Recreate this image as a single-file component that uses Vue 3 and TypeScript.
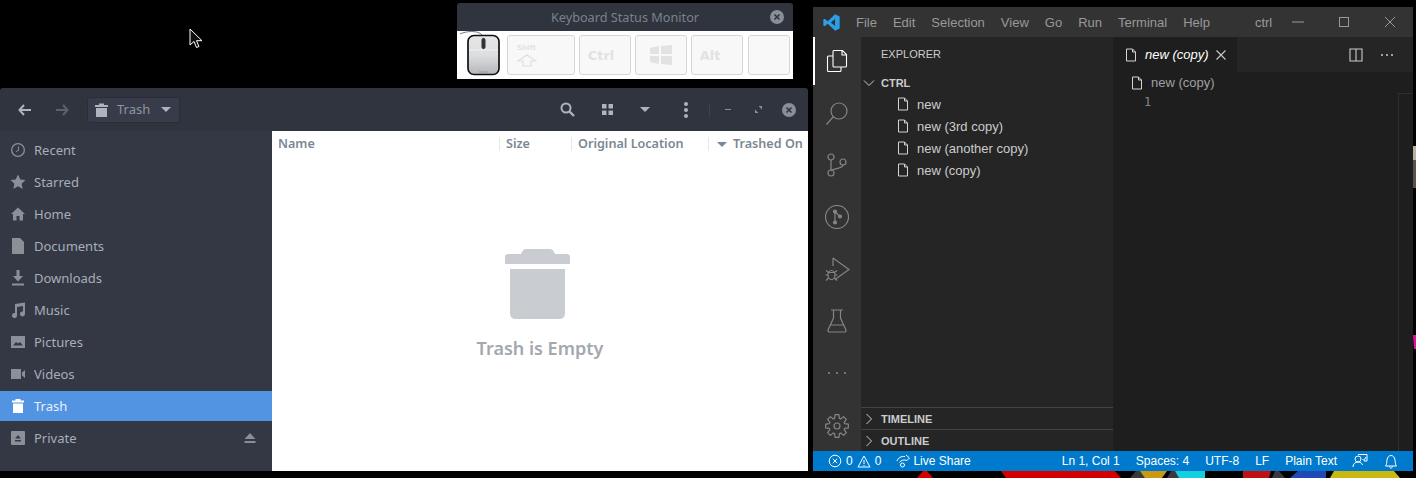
<template>
  <div class="desktop">
    <svg class="wallpaper" width="1416" height="478" viewBox="0 0 1416 478">
      <path d="M917 478l6-7h4l6 7z" fill="#d40000" />
      <path d="M1001 471h114l6 7H1006z" fill="#d40000" />
      <path d="M1130 478l6-7h4l7 7z" fill="#3a3a3a" />
      <path d="M1140 471h27l-5 7h-17z" fill="#c99a10" />
      <path d="M1167 478l4-7h4l5 7z" fill="#3a3a3a" />
      <path d="M1175 471h30v7h-26z" fill="#14cfe0" />
      <path d="M1243 471h28l-2 7h-26z" fill="#c01010" />
      <path d="M1272 478l3-7h4l6 7z" fill="#3a3a3a" />
      <path d="M1298 471h28v7h-36z" fill="#2248b8" />
      <path d="M1334 471h60l6 7h-70z" fill="#c8b810" />
      <rect x="1413" y="146" width="3" height="22" fill="#b8b0a0" />
      <rect x="1413" y="160" width="3" height="28" fill="#5c5048" />
      <path d="M1413 335h3v14h-2z" fill="#e0109c" />
    </svg>

    <svg class="cursor" width="14" height="22" viewBox="0 0 14 22">
      <path d="M1 1v16l4-3.500 2.500 6 2.500-1-2.500-5.800H13z" fill="#111" stroke="#fff" stroke-width="1" />
    </svg>

    <section class="monitor">
      <header class="monitor-title">
        <span>Keyboard Status Monitor</span>
        <svg class="monitor-close" width="14" height="14" viewBox="0 0 14 14">
          <circle cx="7" cy="7" r="7" fill="#8a8e96" />
          <path d="M4.500 4.500l5 5M9.500 4.500l-5 5" stroke="#2f343f" stroke-width="1.600" />
        </svg>
      </header>
      <div class="monitor-keys">
        <svg class="mouse" width="35" height="46" viewBox="0 0 35 46">
          <defs>
            <linearGradient id="mouseBody" x1="0" y1="0" x2="0" y2="1">
              <stop offset="0" stop-color="#e4e6e8" />
              <stop offset="0.5" stop-color="#dcdee0" />
              <stop offset="1" stop-color="#b4b6b9" />
            </linearGradient>
          </defs>
          <path d="M-6 3c6-3 18-4 22 1" fill="none" stroke="#555" stroke-width="0.800" />
          <rect x="2" y="4.500" width="31" height="39" rx="6" fill="url(#mouseBody)" stroke="#111" stroke-width="1.700" />
          <path d="M3 19h29" stroke="#f2f2f2" />
          <path d="M17.500 5v14" stroke="#c9cbce" />
          <rect x="15.500" y="7" width="4" height="11" rx="2" fill="#333" />
          <path d="M13 41h9" stroke="#999" />
        </svg>
        <div class="key key-shift">
          <span class="shift-label">Shift</span>
          <svg width="20" height="13" viewBox="0 0 20 13">
            <path d="M1 7l9-6 9 6h-5v5H6V7z" fill="none" stroke="#dedede" stroke-width="1.200" />
          </svg>
        </div>
        <div class="key key-mid key-ctrl">Ctrl</div>
        <div class="key key-mid">
          <svg width="22" height="20" viewBox="0 0 22 20">
            <path d="M0 3l9-2v8H0zM11 1l11-1v9H11zM0 11h9v8l-9-2zM11 11h11v9l-11-1z" fill="#e2e2e2" />
          </svg>
        </div>
        <div class="key key-mid key-alt">Alt</div>
        <div class="key key-last"></div>
      </div>
    </section>

    <section class="files">
      <header class="files-header">
        <svg class="hd-icon back" width="14" height="12" viewBox="0 0 14 12">
          <path d="M6 1L1.500 6 6 11M2 6h11" fill="none" stroke="#aeb3bc" stroke-width="2" />
        </svg>
        <svg class="hd-icon forward" width="14" height="12" viewBox="0 0 14 12">
          <path d="M8 1l4.500 5L8 11M12 6H1" fill="none" stroke="#5c616c" stroke-width="2" />
        </svg>
        <div class="path-btn">
          <svg width="13" height="14" viewBox="0 0 13 14">
            <path d="M0 2h4V.5h5V2h4v2H0zM1 5h11v9H1z" fill="#aeb3bc" />
          </svg>
          <span class="path-name">Trash</span>
          <i class="caret"></i>
        </div>
        <div class="hd-right">
          <svg class="search" width="15" height="15" viewBox="0 0 15 15">
            <circle cx="6" cy="6" r="4.500" fill="none" stroke="#aeb3bc" stroke-width="2" />
            <path d="M9.500 9.500L14 14" stroke="#aeb3bc" stroke-width="2.400" />
          </svg>
          <svg class="grid" width="11" height="11" viewBox="0 0 11 11">
            <path d="M0 0h4.500v4.500H0zM6.500 0H11v4.500H6.500zM0 6.500h4.500V11H0zM6.500 6.500H11V11H6.500z" fill="#aeb3bc" />
          </svg>
          <i class="caret view-caret"></i>
          <svg class="dots" width="4" height="16" viewBox="0 0 4 16">
            <circle cx="2" cy="2" r="2" fill="#aeb3bc" />
            <circle cx="2" cy="8" r="2" fill="#aeb3bc" />
            <circle cx="2" cy="14" r="2" fill="#aeb3bc" />
          </svg>
          <span class="hd-sep"></span>
          <span class="win-min"></span>
          <svg class="win-restore" width="7" height="7" viewBox="0 0 7 7">
            <path d="M3.500 0H7v3.500zM0 3.500V7h3.500z" fill="#8a8e96" />
          </svg>
          <svg class="win-close" width="14" height="14" viewBox="0 0 14 14">
            <circle cx="7" cy="7" r="7" fill="#8a8e96" />
            <path d="M4.500 4.500l5 5M9.500 4.500l-5 5" stroke="#2f343f" stroke-width="1.600" />
          </svg>
        </div>
      </header>
      <div class="files-body">
        <nav class="places">
          <div v-for="place in places" :key="place.name" class="place" :class="{ active: place.name === 'Trash' }">
            <svg class="place-icon" width="16" height="16" viewBox="0 0 16 16">
              <path :d="place.icon" fill-rule="evenodd" />
            </svg>
            <span>{{ place.name }}</span>
            <svg v-if="place.name === 'Private'" class="eject" width="12" height="10" viewBox="0 0 12 10">
              <path d="M6 0l5.500 6H.5zM.5 8h11v2H.5z" fill="#8a8e96" />
            </svg>
          </div>
        </nav>
        <main class="listing">
          <div class="columns">
            <div class="col">Name</div>
            <div class="col">Size</div>
            <div class="col">Original Location</div>
            <div class="col col-sorted"><i class="sort-caret"></i>Trashed On</div>
          </div>
          <div class="empty">
            <svg class="empty-icon" width="66" height="70" viewBox="0 0 66 70">
              <path d="M21 0h24q3 0 5 5h12q3 0 3 3v7H0V8q0-3 3-3h13q2-5 5-5z" fill="#c9ccd0" />
              <path d="M5 20h55v44q0 6-6 6H11q-6 0-6-6z" fill="#c9ccd0" />
            </svg>
            <div class="empty-text">Trash is Empty</div>
          </div>
        </main>
      </div>
    </section>

    <section class="code">
      <header class="code-title">
        <svg class="code-logo" width="17" height="17" viewBox="0 0 100 100">
          <path d="M71 2l27 12v72L71 98 28 58 10 72 2 68V32l8-4 18 14zM71 29L46 50l25 21z" fill="#2b9fe8" fill-rule="evenodd" />
        </svg>
        <nav class="menu">
          <span v-for="item in menu" :key="item">{{ item }}</span>
        </nav>
        <span class="code-name">ctrl</span>
        <div class="win-buttons">
          <svg width="12" height="12" viewBox="0 0 12 12"><path d="M0 6h12" stroke="#999" /></svg>
          <svg width="12" height="12" viewBox="0 0 12 12"><rect x="1.500" y="1.500" width="9" height="9" fill="none" stroke="#999" /></svg>
          <svg width="12" height="12" viewBox="0 0 12 12"><path d="M1 1l10 10M11 1L1 11" stroke="#999" /></svg>
        </div>
      </header>
      <div class="code-main">
        <aside class="activity">
          <div class="act act-on">
            <svg width="24" height="24" viewBox="0 0 24 24" fill="none" stroke="#fff" stroke-width="1.100">
              <path d="M9 1.500h8.500l4 4V17a1 1 0 0 1-1 1H9a1 1 0 0 1-1-1V2.500a1 1 0 0 1 1-1zM17 1.500V6h4.500" />
              <path d="M8 7H3.500a1 1 0 0 0-1 1v13.500a1 1 0 0 0 1 1H15a1 1 0 0 0 1-1V18" />
            </svg>
          </div>
          <div class="act">
            <svg width="24" height="24" viewBox="0 0 24 24" fill="none" stroke="#858585" stroke-width="1.200">
              <circle cx="14" cy="10" r="8" /><path d="M8.500 15.500L1.500 23.500" />
            </svg>
          </div>
          <div class="act">
            <svg width="24" height="24" viewBox="0 0 24 24" fill="none" stroke="#858585" stroke-width="1.200">
              <circle cx="6" cy="4" r="3" /><circle cx="6" cy="20" r="3" /><circle cx="18" cy="9" r="3" />
              <path d="M6 7v10M18 12c0 4-10 3-12 6" />
            </svg>
          </div>
          <div class="act">
            <svg width="24" height="24" viewBox="0 0 24 24" fill="none" stroke="#858585" stroke-width="1.200">
              <circle cx="12" cy="12" r="11.500" /><path d="M10 6v12M10 7l6 5" />
              <circle cx="10" cy="6.500" r="1.500" fill="#858585" /><circle cx="10" cy="17.500" r="1.500" fill="#858585" /><circle cx="15" cy="11.500" r="1.500" fill="#858585" />
            </svg>
          </div>
          <div class="act">
            <svg width="25" height="25" viewBox="0 0 25 25" fill="none" stroke="#858585" stroke-width="1.200">
              <path d="M8 1l16 11.500-14 10M8 1v8" />
              <ellipse cx="6.500" cy="18" rx="3.500" ry="4.500" />
              <path d="M1 13.500l2.500 2M12 13.500l-2.500 2M.5 18H3M10 18h2.500M1 23.500l2.500-2.500M12 23.500L9.500 21M3.500 15.500h6" />
            </svg>
          </div>
          <div class="act">
            <svg width="20" height="24" viewBox="0 0 20 24" fill="none" stroke="#858585" stroke-width="1.200">
              <path d="M4 1h12M6.500 1v8L1 21a1.500 1.500 0 0 0 1.500 2h15a1.500 1.500 0 0 0 1.500-2L13.500 9V1M4 16h12" />
            </svg>
          </div>
          <div class="act">
            <svg width="20" height="4" viewBox="0 0 20 4">
              <circle cx="2" cy="2" r="1.100" fill="#858585" /><circle cx="10" cy="2" r="1.100" fill="#858585" /><circle cx="18" cy="2" r="1.100" fill="#858585" />
            </svg>
          </div>
          <div class="act act-gear">
            <svg width="24" height="24" viewBox="0 0 24 24" fill="none" stroke="#858585" stroke-width="1.200">
              <circle cx="12" cy="12" r="3" />
              <path :d="gearPath" stroke-linejoin="round" />
            </svg>
          </div>
        </aside>
        <aside class="explorer">
          <div class="ex-title">EXPLORER</div>
          <div class="ex-root">
            <svg class="chev" width="12" height="12" viewBox="0 0 12 12"><path d="M1 3.500l5 5 5-5" fill="none" stroke="#ccc" /></svg>
            CTRL
          </div>
          <div v-for="file in fileNames" :key="file" class="ex-file">
            <svg class="file-icon" width="12" height="14" viewBox="0 0 12 14">
              <path d="M1.500 1h6l3 3v9h-9zM7.500 1v3h3" fill="none" stroke="#d4d4d4" />
            </svg>
            {{ file }}
          </div>
          <div class="ex-spacer"></div>
          <div v-for="sec in ['TIMELINE', 'OUTLINE']" :key="sec" class="ex-section">
            <svg class="chev" width="12" height="12" viewBox="0 0 12 12"><path d="M3.500 1l5 5-5 5" fill="none" stroke="#ccc" /></svg>
            {{ sec }}
          </div>
        </aside>
        <div class="editor">
          <div class="tabs">
            <div class="tab">
              <svg width="12" height="14" viewBox="0 0 12 14"><path d="M1.500 1h6l3 3v9h-9zM7.500 1v3h3" fill="none" stroke="#d4d4d4" /></svg>
              <em>new (copy)</em>
              <svg class="tab-x" width="10" height="10" viewBox="0 0 10 10"><path d="M.5.5l9 9M9.500.5l-9 9" stroke="#ccc" stroke-width="1.100" /></svg>
            </div>
            <div class="tab-actions">
              <svg width="14" height="14" viewBox="0 0 14 14"><path d="M1 1h12v12H1zM7 1v12" fill="none" stroke="#ccc" stroke-width="1.100" /></svg>
              <svg width="14" height="4" viewBox="0 0 14 4"><circle cx="2" cy="2" r="1" fill="#ccc" /><circle cx="7" cy="2" r="1" fill="#ccc" /><circle cx="12" cy="2" r="1" fill="#ccc" /></svg>
            </div>
          </div>
          <div class="crumbs">
            <svg width="12" height="14" viewBox="0 0 12 14"><path d="M1.500 1h6l3 3v9h-9zM7.500 1v3h3" fill="none" stroke="#d4d4d4" /></svg>
            new (copy)
          </div>
          <div class="edit-area">
            <div class="lines"><span>1</span></div>
            <div class="scroll-strip"></div>
          </div>
        </div>
      </div>
      <footer class="status">
        <svg class="st-err" width="14" height="14" viewBox="0 0 14 14" fill="none" stroke="#fff">
          <circle cx="7" cy="7" r="5.800" /><path d="M4.800 4.800l4.400 4.400M9.200 4.800l-4.400 4.400" />
        </svg>
        <span class="st-num">0</span>
        <svg class="st-warn" width="14" height="13" viewBox="0 0 14 13" fill="none" stroke="#fff">
          <path d="M7 1l6 11H1zM7 5v4M7 10v1" />
        </svg>
        <span class="st-num">0</span>
        <svg class="st-share" width="15" height="14" viewBox="0 0 15 14" fill="none" stroke="#fff">
          <path d="M1 7c1-3 4-5 8-4.500M3.500 8.500C5 6 8 5.500 11 6.500L13.500 4 10 1" />
          <circle cx="6.500" cy="11" r="2" />
        </svg>
        <span>Live Share</span>
        <div class="st-right">
          <span v-for="item in statusItems" :key="item">{{ item }}</span>
          <svg class="st-feedback" width="16" height="16" viewBox="0 0 16 16" fill="none" stroke="#fff">
            <circle cx="6" cy="6" r="3" /><path d="M1 14c0-3 2-5 5-5s4 1.500 4.500 3M6 1.500h9V8h-3M10.500 6l1.500 1.500L14 4" />
          </svg>
          <svg class="st-bell" width="14" height="15" viewBox="0 0 14 15" fill="none" stroke="#fff">
            <path d="M1.500 12c1.500-1.500 1-3.500 1.500-6 .5-3 2-4.500 4-4.500s3.500 1.500 4 4.500c.5 2.500 0 4.500 1.500 6zM5.500 12.500c0 2 3 2 3 0" />
          </svg>
        </div>
      </footer>
    </section>
  </div>
</template>

<script setup lang="ts">
interface Place {
  name: string
  icon: string
}

// paths are on a 16 box, filled with the row's text colour
const places: Place[] = [
  { name: 'Recent', icon: 'M8 1a7 7 0 1 0 0 14A7 7 0 0 0 8 1zm0 1.300a5.700 5.700 0 1 1 0 11.400A5.700 5.700 0 0 1 8 2.300zM8 4.500h1V8.500L6.200 10l-.5-.8L8 8z' },
  { name: 'Starred', icon: 'M8 .5l2.300 5 5.200.6-3.900 3.600 1.100 5.300L8 12.300 3.300 15l1.100-5.300L.5 6.100l5.200-.6z' },
  { name: 'Home', icon: 'M8 1.500l7 6.500h-2v6.500H9.500V10h-3v4.500H3V8H1z' },
  { name: 'Documents', icon: 'M2 0h8l4 4v12H2z' },
  { name: 'Downloads', icon: 'M6.500 0h3v6H13l-5 5.500L3 6h3.500zM2 13.500h12V15.500H2z' },
  { name: 'Music', icon: 'M5 2l10-1.500V12a2.500 2.500 0 1 1-2-2.400V4L7 5v8.500a2.500 2.500 0 1 1-2-2.400z' },
  { name: 'Pictures', icon: 'M1 2h14v12H1zM3 11.500h10l-3-3.500-2 1.500-2-1.500z' },
  { name: 'Videos', icon: 'M1 3h10v10H1zM12 6.500L15 4v8l-3-2.500z' },
  { name: 'Trash', icon: 'M2 2.500h3.500V1h5v1.500H14v2H2zM3 5.500h10V15H3z' },
  { name: 'Private', icon: 'M2 1h12a1 1 0 0 1 1 1v12a1 1 0 0 1-1 1H2a1 1 0 0 1-1-1V2a1 1 0 0 1 1-1zm6 4L5 8.500h6zM5 10v1.500h6V10z' }
]

const menu = ['File', 'Edit', 'Selection', 'View', 'Go', 'Run', 'Terminal', 'Help']
const fileNames = ['new', 'new (3rd copy)', 'new (another copy)', 'new (copy)']
const statusItems = ['Ln 1, Col 1', 'Spaces: 4', 'UTF-8', 'LF', 'Plain Text']

// eight-toothed outline for the settings cog
const gearPath = (() => {
  const pts: string[] = []
  const teeth = 8
  for (let i = 0; i < teeth; i++) {
    const a = (i * 2 * Math.PI) / teeth
    for (const [off, r] of [[-0.3, 8], [-0.17, 11.5], [0.17, 11.5], [0.3, 8]]) {
      pts.push(`${(12 + r * Math.sin(a + off)).toFixed(2)} ${(12 - r * Math.cos(a + off)).toFixed(2)}`)
    }
  }
  return `M${pts.join('L')}z`
})()
</script>

<style>
html,
body {
  margin: 0;
  background: #000;
}
</style>

<style scoped>
.desktop {
  position: relative;
  width: 1416px;
  height: 478px;
  overflow: hidden;
  background: #000;
}
.wallpaper {
  position: absolute;
  left: 0;
  top: 0;
}
.cursor {
  position: absolute;
  left: 189px;
  top: 28px;
}

/* keyboard monitor */
.monitor {
  position: absolute;
  left: 457px;
  top: 3px;
  width: 336px;
  height: 76px;
  display: flex;
  flex-direction: column;
  font-family: "Noto Sans", sans-serif;
}
.monitor-title {
  height: 28px;
  flex: none;
  display: flex;
  align-items: center;
  justify-content: center;
  position: relative;
  background: #2f343f;
  border-radius: 3px 3px 0 0;
  color: #7c818c;
  font-size: 12.700px;
}
.monitor-close {
  position: absolute;
  right: 9px;
  top: 7px;
}
.monitor-keys {
  height: 48px;
  flex: none;
  display: flex;
  align-items: flex-start;
  background: #fff;
  padding: 4px 3px 4px 9px;
  gap: 4px;
  box-sizing: border-box;
}
.mouse {
  flex: none;
  overflow: visible;
  margin: -4px 2px 0 0;
}
.key {
  box-sizing: border-box;
  height: 40px;
  flex: none;
  border: 1px solid #d6d6d6;
  border-radius: 3px;
  background: #f8f8f8;
  color: #e2e2e2;
  font-family: "DejaVu Sans", sans-serif;
  font-size: 13px;
  font-weight: 700;
  display: flex;
  align-items: center;
  justify-content: center;
}
.key-shift {
  width: 68px;
  flex-direction: column;
  align-items: flex-start;
  padding-left: 9px;
  gap: 1px;
}
.shift-label {
  font-size: 7px;
  line-height: 9px;
}
.key-mid {
  width: 52px;
}
.key-ctrl {
  padding-right: 8px;
}
.key-alt {
  padding-right: 14px;
}
.key-last {
  width: 42px;
  margin-left: 1px;
}

/* file manager */
.files {
  position: absolute;
  left: 0;
  top: 88px;
  width: 808px;
  height: 383px;
  display: flex;
  flex-direction: column;
  font-family: "Noto Sans", sans-serif;
  font-size: 13px;
}
.files-header {
  height: 43px;
  flex: none;
  display: flex;
  align-items: center;
  background: #2f343f;
  border-radius: 3px 3px 0 0;
}
.back {
  margin-left: 18px;
}
.forward {
  margin-left: 23px;
}
.path-btn {
  margin-left: 18px;
  width: 93px;
  height: 26px;
  box-sizing: border-box;
  padding-left: 7px;
  display: flex;
  align-items: center;
  background: #383c4a;
  border: 1px solid #2b2e39;
  border-radius: 3px;
  color: #8f949e;
}
.path-name {
  margin-left: 9px;
  position: relative;
  top: -1px;
}
.caret {
  width: 0;
  height: 0;
  border-left: 5px solid transparent;
  border-right: 5px solid transparent;
  border-top: 5px solid #aeb3bc;
  margin-left: 11px;
}
.hd-right {
  margin-left: auto;
  display: flex;
  align-items: center;
}
.search {
  margin-right: 27px;
}
.grid {
  margin-right: 27px;
}
.view-caret {
  margin: 0 34px 0 0;
}
.dots {
  margin-right: 21px;
}
.hd-sep {
  width: 1px;
  height: 14px;
  background: #3d4250;
  margin-right: 15px;
}
.win-min {
  width: 6px;
  height: 1px;
  background: #8a8e96;
  margin-right: 24px;
}
.win-restore {
  margin-right: 20px;
}
.win-close {
  margin-right: 12px;
}
.files-body {
  flex: 1;
  display: flex;
  min-height: 0;
}
.places {
  width: 272px;
  flex: none;
  box-sizing: border-box;
  padding-top: 4px;
  display: flex;
  flex-direction: column;
  gap: 2px;
  background: #343844;
  color: #a6aeba;
}
.place {
  height: 30px;
  flex: none;
  display: flex;
  align-items: center;
  padding-left: 10px;
}
.place span {
  margin-left: 8px;
}
.place-icon {
  fill: #8a8f98;
  flex: none;
}
.place.active {
  background: #5294e2;
  color: #e8f0fb;
}
.place.active .place-icon {
  fill: #fff;
}
.eject {
  margin-left: auto;
  margin-right: 16px;
}
.listing {
  flex: 1;
  display: flex;
  flex-direction: column;
  background: #fff;
}
.columns {
  height: 26px;
  flex: none;
  display: grid;
  grid-template-columns: 227px 72px 137px 1fr;
  align-items: center;
  color: #7d8793;
  font-weight: 600;
  font-size: 12.600px;
}
.col {
  height: 14px;
  line-height: 14px;
  padding-left: 6px;
  border-left: 1px solid #e6e8ea;
  white-space: nowrap;
}
.col:first-child {
  border-left: 0;
}
.col-sorted {
  display: flex;
  align-items: center;
}
.sort-caret {
  width: 0;
  height: 0;
  border-left: 5px solid transparent;
  border-right: 5px solid transparent;
  border-top: 5px solid #7d8793;
  margin: 0 6px 0 2px;
}
.empty {
  flex: 1;
  display: flex;
  flex-direction: column;
  align-items: center;
  justify-content: center;
  padding-bottom: 20px;
}
.empty-icon {
  margin-right: 4px;
}
.empty-text {
  margin-top: 17px;
  line-height: 24px;
  font-size: 18px;
  font-weight: 600;
  color: #a3a8ae;
}

/* code editor */
.code {
  position: absolute;
  left: 813px;
  top: 7px;
  width: 600px;
  height: 464px;
  display: flex;
  flex-direction: column;
  font-family: "Liberation Sans", sans-serif;
  font-size: 13px;
  color: #ccc;
}
.code-title {
  height: 30px;
  flex: none;
  display: flex;
  align-items: center;
  background: #333;
  color: #999;
}
.code-logo {
  margin-left: 10px;
}
.menu {
  display: flex;
  gap: 16px;
  margin-left: 16px;
}
.code-name {
  margin-left: 45px;
}
.win-buttons {
  margin-left: auto;
  display: flex;
  gap: 34px;
  margin-right: 17px;
}
.code-main {
  flex: 1;
  display: flex;
  min-height: 0;
}
.activity {
  width: 48px;
  flex: none;
  display: flex;
  flex-direction: column;
  background: #333;
}
.act {
  height: 52px;
  flex: none;
  display: flex;
  align-items: center;
  justify-content: center;
  box-sizing: border-box;
}
.act-on {
  height: 48px;
  margin-bottom: 2px;
  border-left: 2px solid #fff;
  padding-right: 2px;
}
.act-gear {
  margin-top: auto;
  height: 50px;
}
.explorer {
  width: 252px;
  flex: none;
  display: flex;
  flex-direction: column;
  background: #252526;
  font-size: 13px;
}
.ex-title {
  height: 35px;
  line-height: 35px;
  padding-left: 20px;
  font-size: 11px;
}
.ex-root,
.ex-section {
  height: 22px;
  flex: none;
  display: flex;
  align-items: center;
  font-size: 11px;
  font-weight: 700;
}
.ex-root {
  margin-bottom: -1px;
}
.chev {
  margin: 0 6px 0 2px;
}
.ex-file {
  height: 22px;
  flex: none;
  display: flex;
  align-items: center;
  padding-left: 36px;
}
.file-icon {
  margin-right: 8px;
}
.ex-spacer {
  flex: 1;
}
.ex-section {
  border-top: 1px solid #434344;
  box-sizing: border-box;
}
.editor {
  flex: 1;
  min-width: 0;
  display: flex;
  flex-direction: column;
  background: #1e1e1e;
}
.tabs {
  height: 35px;
  flex: none;
  display: flex;
  align-items: center;
  background: #252526;
}
.tab {
  width: 124px;
  height: 100%;
  box-sizing: border-box;
  padding-left: 12px;
  display: flex;
  align-items: center;
  gap: 8px;
  background: #1e1e1e;
  color: #fff;
}
.tab-x {
  margin-left: -1px;
}
.tab-actions {
  margin-left: auto;
  display: flex;
  align-items: center;
  gap: 17px;
  margin-right: 19px;
}
.crumbs {
  height: 21px;
  flex: none;
  display: flex;
  align-items: center;
  gap: 8px;
  padding-left: 18px;
  color: #a0a0a0;
}
.edit-area {
  flex: 1;
  display: flex;
  min-height: 0;
}
.lines {
  flex: 1;
  padding: 1px 0 0 31px;
  font-family: "DejaVu Sans Mono", monospace;
  font-size: 12px;
  line-height: 16px;
  color: #858585;
}
.scroll-strip {
  width: 14px;
  flex: none;
  border-left: 1px solid #2f2f2f;
  border-top: 1px solid #2f2f2f;
}
.status {
  height: 20px;
  flex: none;
  display: flex;
  align-items: center;
  padding-left: 15px;
  background: #007acc;
  color: #fff;
  font-size: 12px;
}
.st-num {
  margin-left: 4px;
}
.st-warn {
  margin-left: 4px;
}
.st-share {
  margin: 0 2px 0 15px;
}
.st-right {
  margin-left: auto;
  display: flex;
  align-items: center;
  gap: 16px;
  margin-right: 15px;
}
.st-feedback {
  margin-left: -1px;
}
</style>
